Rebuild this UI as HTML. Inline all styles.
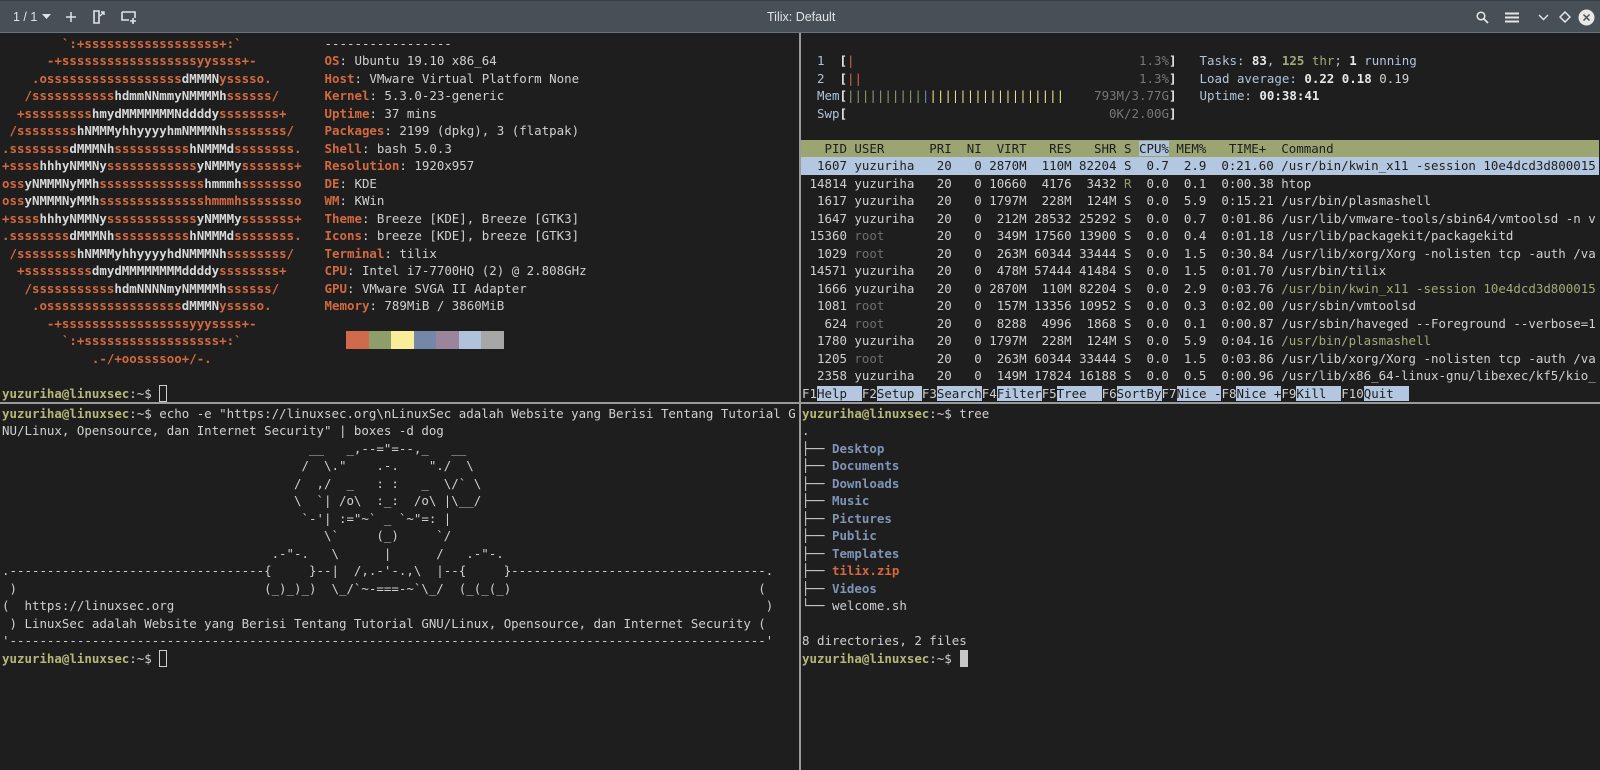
<!DOCTYPE html>
<html><head><meta charset="utf-8">
<style>
*{margin:0;padding:0;box-sizing:border-box}
html,body{width:1600px;height:770px;overflow:hidden;background:#1e1e1e}
#bar{position:absolute;left:0;top:0;width:1600px;height:33px;background:#475057;border-bottom:1px solid #6b747c;border-top:1px solid #3a4047}
#bar .t{position:absolute;font:12.5px "Liberation Sans",sans-serif;color:#dfe3e6;top:9px}
.pane{position:absolute;font-family:"DejaVu Sans Mono","Liberation Mono",monospace;font-size:12.45px;line-height:17.5px;white-space:normal;color:#d0d0d0}
.pane div{height:17.5px;white-space:pre}
.o{color:#d4693f;font-weight:bold}
.w{color:#d8d8d8;font-weight:bold}
.p{color:#b5b87a;font-weight:bold}
.c{color:#afc4db}
.b{font-weight:bold;color:#e8e8e8}
.g{color:#8f9d6a}
.r{color:#cf6a4c}
.y{color:#e8e08a}
.bl{color:#7587a6}
.dim{color:#777}
.root{color:#6f6f6f}
.th{color:#a2ab78}
.dir{color:#7f95b8;font-weight:bold}
.zip{color:#d4693f;font-weight:bold}
.hdr{background:#9aa572;color:#1e1e1e;width:798px;margin-left:-1px;padding-left:1px}
.sel{background:#b3c8e0;color:#1e1e1e;width:798px;margin-left:-1px;padding-left:1px}
.hc{background:#afc4db}
.fk{background:#b3c8e0;color:#1e1e1e}
#vdiv{position:absolute;left:799px;top:33px;width:2px;height:737px;background:#9a9a9a}
#hdiv{position:absolute;left:0;top:402px;width:1600px;height:2px;background:#9a9a9a}
.cur{position:absolute;width:8px;height:17px;border:1px solid #cfcfcf}
</style></head><body>
<div id="bar">
 <span class="t" style="left:13px">1 / 1</span>
 <svg style="position:absolute;left:42px;top:13px" width="9" height="6"><path d="M0 0 L9 0 L4.5 5 Z" fill="#dfe3e6"/></svg>
 <svg style="position:absolute;left:65px;top:10px" width="12" height="12"><path d="M6 1 V11 M1 6 H11" stroke="#dfe3e6" stroke-width="1.5"/></svg>
 <svg style="position:absolute;left:92px;top:8px" width="14" height="16"><path d="M2 2 H7 V14 H2 Z" fill="none" stroke="#dfe3e6" stroke-width="1.6"/><path d="M9 3 L12 3 L12 6 M12 3 L8 7" fill="none" stroke="#dfe3e6" stroke-width="1.4"/></svg>
 <svg style="position:absolute;left:121px;top:9px" width="16" height="14"><path d="M1 2 H14 V8 M1 2 V10 H8" fill="none" stroke="#dfe3e6" stroke-width="1.6"/><path d="M12 8 V14 M9 11 H15" stroke="#dfe3e6" stroke-width="1.6"/></svg>
 <span class="t" style="left:767px">Tilix: Default</span>
 <svg style="position:absolute;left:1476px;top:10px" width="13" height="13"><circle cx="5" cy="5" r="3.8" fill="none" stroke="#e6e6e6" stroke-width="1.5"/><path d="M8 8 L12 12" stroke="#e6e6e6" stroke-width="1.8"/></svg>
 <svg style="position:absolute;left:1505px;top:11px" width="14" height="11"><path d="M0 1.5 H14 M0 5.5 H14 M0 9.5 H14" stroke="#e6e6e6" stroke-width="2"/></svg>
 <svg style="position:absolute;left:1538px;top:13px" width="11" height="7"><path d="M1 1 L5.5 5.5 L10 1" fill="none" stroke="#e6e6e6" stroke-width="1.4"/></svg>
 <svg style="position:absolute;left:1559px;top:10px" width="12" height="12"><path d="M6 1 L11 6 L6 11 L1 6 Z" fill="none" stroke="#e6e6e6" stroke-width="1.5"/></svg>
 <svg style="position:absolute;left:1578px;top:8px" width="17" height="17"><circle cx="8.5" cy="8.5" r="8" fill="#e8e8e8"/><path d="M5.5 5.5 L11.5 11.5 M11.5 5.5 L5.5 11.5" stroke="#475057" stroke-width="1.5"/></svg>
</div>
<div id="vdiv"></div><div id="hdiv"></div>

<div class="pane" style="left:2px;top:34.5px">
<div><span class="o">        `:+ssssssssssssssssss+:`</span></div>
<div><span class="o">      -+ssssssssssssssssssyyssss+-</span></div>
<div><span class="o">    .ossssssssssssssssss</span><span class="w">dMMMN</span><span class="o">ysssso.</span></div>
<div><span class="o">   /sssssssssss</span><span class="w">hdmmNNmmyNMMMMh</span><span class="o">ssssss/</span></div>
<div><span class="o">  +sssssssss</span><span class="w">hmydMMMMMMMNddddy</span><span class="o">ssssssss+</span></div>
<div><span class="o"> /ssssssss</span><span class="w">hNMMMyhhyyyyhmNMMMNh</span><span class="o">ssssssss/</span></div>
<div><span class="o">.ssssssss</span><span class="w">dMMMNh</span><span class="o">ssssssssss</span><span class="w">hNMMMd</span><span class="o">ssssssss.</span></div>
<div><span class="o">+ssss</span><span class="w">hhhyNMMNy</span><span class="o">ssssssssssss</span><span class="w">yNMMMy</span><span class="o">sssssss+</span></div>
<div><span class="o">oss</span><span class="w">yNMMMNyMMh</span><span class="o">ssssssssssssss</span><span class="w">hmmmh</span><span class="o">ssssssso</span></div>
<div><span class="o">oss</span><span class="w">yNMMMNyMMh</span><span class="o">sssssssssssssshmmmhssssssso</span></div>
<div><span class="o">+ssss</span><span class="w">hhhyNMMNy</span><span class="o">ssssssssssss</span><span class="w">yNMMMy</span><span class="o">sssssss+</span></div>
<div><span class="o">.ssssssss</span><span class="w">dMMMNh</span><span class="o">ssssssssss</span><span class="w">hNMMMd</span><span class="o">ssssssss.</span></div>
<div><span class="o"> /ssssssss</span><span class="w">hNMMMyhhyyyyhdNMMMNh</span><span class="o">ssssssss/</span></div>
<div><span class="o">  +sssssssss</span><span class="w">dmydMMMMMMMMddddy</span><span class="o">ssssssss+</span></div>
<div><span class="o">   /sssssssssss</span><span class="w">hdmNNNNmyNMMMMh</span><span class="o">ssssss/</span></div>
<div><span class="o">    .ossssssssssssssssss</span><span class="w">dMMMN</span><span class="o">ysssso.</span></div>
<div><span class="o">      -+sssssssssssssssssyyyssss+-</span></div>
<div><span class="o">        `:+ssssssssssssssssss+:`</span></div>
<div><span class="o">            .-/+oossssoo+/-.</span></div>
<div> </div>
<div><span class="p">yuzuriha@linuxsec</span>:~$ </div>
</div>
<div class="pane" style="left:324.5px;top:34.5px">
<div>-----------------</div>
<div><span class="o">OS</span>: Ubuntu 19.10 x86_64</div>
<div><span class="o">Host</span>: VMware Virtual Platform None</div>
<div><span class="o">Kernel</span>: 5.3.0-23-generic</div>
<div><span class="o">Uptime</span>: 37 mins</div>
<div><span class="o">Packages</span>: 2199 (dpkg), 3 (flatpak)</div>
<div><span class="o">Shell</span>: bash 5.0.3</div>
<div><span class="o">Resolution</span>: 1920x957</div>
<div><span class="o">DE</span>: KDE</div>
<div><span class="o">WM</span>: KWin</div>
<div><span class="o">Theme</span>: Breeze [KDE], Breeze [GTK3]</div>
<div><span class="o">Icons</span>: breeze [KDE], breeze [GTK3]</div>
<div><span class="o">Terminal</span>: tilix</div>
<div><span class="o">CPU</span>: Intel i7-7700HQ (2) @ 2.808GHz</div>
<div><span class="o">GPU</span>: VMware SVGA II Adapter</div>
<div><span class="o">Memory</span>: 789MiB / 3860MiB</div>
</div>
<div style="position:absolute;left:346px;top:331px;height:18px;display:flex">
<div style="width:22.5px;background:#cf6a4c"></div><div style="width:22.5px;background:#8f9d6a"></div><div style="width:22.5px;background:#f9ee98"></div><div style="width:22.5px;background:#7587a6"></div><div style="width:22.5px;background:#9b859d"></div><div style="width:22.5px;background:#afc4db"></div><div style="width:22.5px;background:#a7a7a7"></div>
</div>
<div class="cur" style="left:159px;top:385px"></div>

<div class="pane" style="left:802px;top:34.5px">
<div> </div>
<div>  <span class="c">1</span>  <span class="b">[</span><span class="r">|</span>                                      <span class="dim">1.3%</span><span class="b">]</span></div>
<div>  <span class="c">2</span>  <span class="b">[</span><span class="r">||</span>                                     <span class="dim">1.3%</span><span class="b">]</span></div>
<div>  <span class="c">Mem</span><span class="b">[</span><span class="g">||||||||||</span><span class="bl">|</span><span class="y">||||||||||||||||||</span>    <span class="dim">793M/3.77G</span><span class="b">]</span></div>
<div>  <span class="c">Swp</span><span class="b">[</span>                                   <span class="dim">0K/2.00G</span><span class="b">]</span></div>
<div> </div>
<div class="hdr">   PID USER      PRI  NI  VIRT   RES   SHR S <span class="hc">CPU%</span> MEM%   TIME+  Command</div>
<div class="sel">  1607 yuzuriha   20   0 2870M  110M 82204 S  0.7  2.9  0:21.60 /usr/bin/kwin_x11 -session 10e4dcd3d800015</div>
<div> 14814 yuzuriha   20   0 10660  4176  3432 <span class="g">R</span>  0.0  0.1  0:00.38 htop</div>
<div>  1617 yuzuriha   20   0 1797M  228M  124M S  0.0  5.9  0:15.21 /usr/bin/plasmashell</div>
<div>  1647 yuzuriha   20   0  212M 28532 25292 S  0.0  0.7  0:01.86 /usr/lib/vmware-tools/sbin64/vmtoolsd -n v</div>
<div> 15360 <span class="root">root</span>       20   0  349M 17560 13900 S  0.0  0.4  0:01.18 /usr/lib/packagekit/packagekitd</div>
<div>  1029 <span class="root">root</span>       20   0  263M 60344 33444 S  0.0  1.5  0:30.84 /usr/lib/xorg/Xorg -nolisten tcp -auth /va</div>
<div> 14571 yuzuriha   20   0  478M 57444 41484 S  0.0  1.5  0:01.70 /usr/bin/tilix</div>
<div>  1666 yuzuriha   20   0 2870M  110M 82204 S  0.0  2.9  0:03.76 <span class="th">/usr/bin/kwin_x11 -session 10e4dcd3d800015</span></div>
<div>  1081 <span class="root">root</span>       20   0  157M 13356 10952 S  0.0  0.3  0:02.00 /usr/sbin/vmtoolsd</div>
<div>   624 <span class="root">root</span>       20   0  8288  4996  1868 S  0.0  0.1  0:00.87 /usr/sbin/haveged --Foreground --verbose=1</div>
<div>  1780 yuzuriha   20   0 1797M  228M  124M S  0.0  5.9  0:04.16 <span class="th">/usr/bin/plasmashell</span></div>
<div>  1205 <span class="root">root</span>       20   0  263M 60344 33444 S  0.0  1.5  0:03.86 /usr/lib/xorg/Xorg -nolisten tcp -auth /va</div>
<div>  2358 yuzuriha   20   0  149M 17824 16188 S  0.0  0.5  0:00.96 /usr/lib/x86_64-linux-gnu/libexec/kf5/kio_</div>
<div>F1<span class="fk">Help  </span>F2<span class="fk">Setup </span>F3<span class="fk">Search</span>F4<span class="fk">Filter</span>F5<span class="fk">Tree  </span>F6<span class="fk">SortBy</span>F7<span class="fk">Nice -</span>F8<span class="fk">Nice +</span>F9<span class="fk">Kill  </span>F10<span class="fk">Quit  </span></div>
</div>
<div class="pane" style="left:1199.5px;top:34.5px">
<div> </div>
<div><span class="c">Tasks: </span><span class="b">83</span><span class="c">, </span><span class="th" style="font-weight:bold">125</span><span class="th"> thr</span><span class="c">; </span><span class="b">1</span><span class="c"> running</span></div>
<div><span class="c">Load average: </span><span class="b">0.22 0.18 </span>0.19</div>
<div><span class="c">Uptime: </span><span class="b">00:38:41</span></div>
</div>

<div class="pane" style="left:2px;top:404.5px">
<div><span class="p">yuzuriha@linuxsec</span>:~$ echo -e "https://linuxsec.org\nLinuxSec adalah Website yang Berisi Tentang Tutorial G</div>
<div>NU/Linux, Opensource, dan Internet Security" | boxes -d dog</div>
<div>                                         __   _,--="=--,_   __</div>
<div>                                        /  \."    .-.    "./  \</div>
<div>                                       /  ,/  _   : :   _  \/` \</div>
<div>                                       \  `| /o\  :_:  /o\ |\__/</div>
<div>                                        `-'| :="~` _ `~"=: |</div>
<div>                                           \`     (_)     `/</div>
<div>                                    .-"-.   \      |      /   .-"-.</div>
<div>.----------------------------------{     }--|  /,.-'-.,\  |--{     }----------------------------------.</div>
<div> )                                 (_)_)_)  \_/`~-===-~`\_/  (_(_(_)                                 (</div>
<div>(  https://linuxsec.org                                                                               )</div>
<div> ) LinuxSec adalah Website yang Berisi Tentang Tutorial GNU/Linux, Opensource, dan Internet Security (</div>
<div>'-----------------------------------------------------------------------------------------------------'</div>
<div><span class="p">yuzuriha@linuxsec</span>:~$ </div>
</div>
<div class="cur" style="left:159px;top:650px"></div>

<div class="pane" style="left:802px;top:404.5px">
<div><span class="p">yuzuriha@linuxsec</span>:~$ tree</div>
<div>.</div>
<div>├── <span class="dir">Desktop</span></div>
<div>├── <span class="dir">Documents</span></div>
<div>├── <span class="dir">Downloads</span></div>
<div>├── <span class="dir">Music</span></div>
<div>├── <span class="dir">Pictures</span></div>
<div>├── <span class="dir">Public</span></div>
<div>├── <span class="dir">Templates</span></div>
<div>├── <span class="zip">tilix.zip</span></div>
<div>├── <span class="dir">Videos</span></div>
<div>└── welcome.sh</div>
<div> </div>
<div>8 directories, 2 files</div>
<div><span class="p">yuzuriha@linuxsec</span>:~$ </div>
</div>
<div style="position:absolute;left:959.5px;top:650px;width:8px;height:17px;background:#c8c8c8"></div>
</body></html>
